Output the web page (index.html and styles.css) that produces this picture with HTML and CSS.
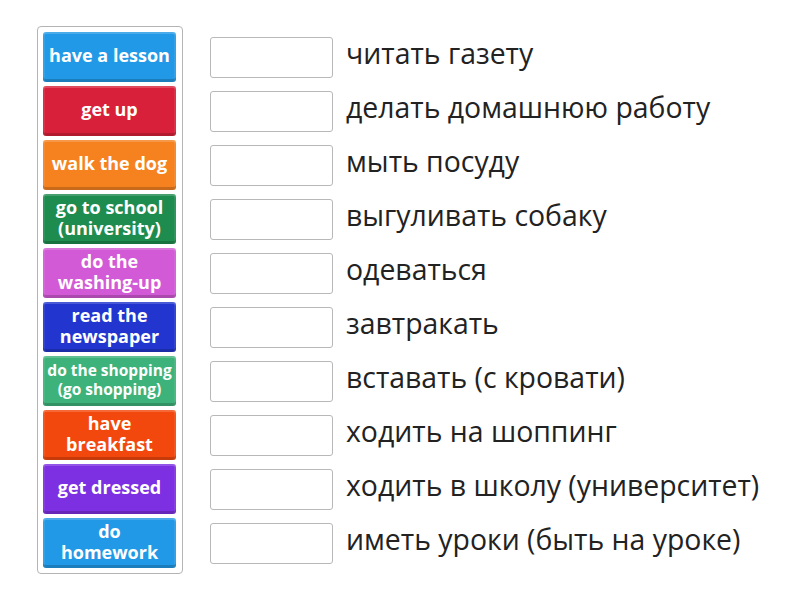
FILE: index.html
```html
<!DOCTYPE html>
<html>
<head>
<meta charset="utf-8">
<link rel="stylesheet" href="styles.css">
</head>
<body>
<div class="board">
  <div class="panel">
    <div class="tile c-blue">have a lesson</div>
    <div class="tile c-red">get up</div>
    <div class="tile c-orange">walk the dog</div>
    <div class="tile c-green">go to school (university)</div>
    <div class="tile c-pink">do the washing-up</div>
    <div class="tile c-navy">read the newspaper</div>
    <div class="tile c-teal small">do the shopping (go shopping)</div>
    <div class="tile c-redorange">have breakfast</div>
    <div class="tile c-purple">get dressed</div>
    <div class="tile c-blue">do homework</div>
  </div>
  <div class="targets">
    <div class="row"><div class="box"></div><span class="label">читать газету</span></div>
    <div class="row"><div class="box"></div><span class="label">делать домашнюю работу</span></div>
    <div class="row"><div class="box"></div><span class="label">мыть посуду</span></div>
    <div class="row"><div class="box"></div><span class="label">выгуливать собаку</span></div>
    <div class="row"><div class="box"></div><span class="label">одеваться</span></div>
    <div class="row"><div class="box"></div><span class="label">завтракать</span></div>
    <div class="row"><div class="box"></div><span class="label">вставать (с кровати)</span></div>
    <div class="row"><div class="box"></div><span class="label">ходить на шоппинг</span></div>
    <div class="row"><div class="box"></div><span class="label">ходить в школу (университет)</span></div>
    <div class="row"><div class="box"></div><span class="label">иметь уроки (быть на уроке)</span></div>
  </div>
</div>
</body>
</html>
```
FILE: styles.css
```css
html, body {
  margin: 0;
  padding: 0;
  background: #ffffff;
}
body {
  font-family: "Open Sans", "Liberation Sans", sans-serif;
}
.board {
  display: flex;
  align-items: flex-start;
  padding: 26px 0 0 37px;
  gap: 27px;
}
.panel {
  display: flex;
  flex-direction: column;
  gap: 4px;
  padding: 5px 6px 5px 5px;
  border: 1px solid #b4b4b4;
  border-radius: 4px;
  width: 133px;
}
.tile {
  height: 50px;
  box-sizing: border-box;
  display: flex;
  align-items: center;
  justify-content: center;
  text-align: center;
  color: #ffffff;
  font-weight: 700;
  font-size: 18px;
  line-height: 21px;
  padding: 0 5px 3px;
  border-radius: 3px;
  box-shadow: inset 0 -3px 0 rgba(0,0,0,0.18), inset 0 2px 0 rgba(255,255,255,0.18), inset 2px 0 0 rgba(255,255,255,0.08), inset -2px 0 0 rgba(255,255,255,0.08);
}
.tile.small {
  font-size: 15.5px;
  line-height: 19px;
  padding: 0 1px 3px;
}
.c-blue { background: #2299e6; }
.c-red { background: #d8203a; }
.c-orange { background: #f5821f; }
.c-green { background: #1e8c4f; }
.c-pink { background: #d25ad6; }
.c-navy { background: #2236cf; }
.c-teal { background: #3db37b; }
.c-redorange { background: #f3480d; }
.c-purple { background: #7d2fe2; }

.targets {
  display: flex;
  flex-direction: column;
  gap: 4px;
  padding-top: 6px;
}
.row {
  height: 50px;
  display: flex;
  align-items: center;
  gap: 13px;
}
.box {
  width: 123px;
  height: 41px;
  box-sizing: border-box;
  border: 1px solid #b8b8b8;
  border-radius: 3px;
  background: #fff;
}
.label {
  font-size: 28.4px;
  line-height: 36px;
  color: #222222;
  white-space: nowrap;
  margin-top: -9px;
}
```
